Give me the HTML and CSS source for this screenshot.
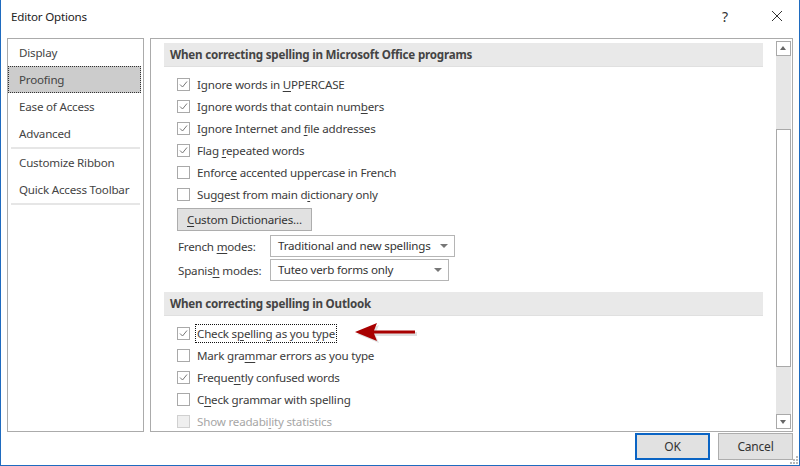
FILE: index.html
```html
<!DOCTYPE html>
<html>
<head>
    <meta charset="UTF-8">
    <title>Editor Options</title>
    <link rel="stylesheet" href="styles.css">
</head>
<body>
    <div class="Dialog">
        <div class="TitleBar">
            <span class="Title">Editor Options</span>
            <span class="Help">?</span>
            <svg class="Close" width="12" height="12" viewBox="0 0 12 12">
                <path d="M1 1 L11 11 M11 1 L1 11" stroke="#333" stroke-width="1" fill="none"/>
            </svg>
        </div>

        <div class="Body">
            <ul class="Nav">
                <li>Display</li>
                <li class="Selected"><span>Proofing</span></li>
                <li>Ease of Access</li>
                <li>Advanced</li>
                <li class="Sep"></li>
                <li>Customize Ribbon</li>
                <li>Quick Access Toolbar</li>
                <li class="Sep"></li>
            </ul>

            <div class="Pane">
                <div class="PaneContent">
                    <div class="Section">When correcting spelling in Microsoft Office programs</div>
                    <div class="Group">
                        <div class="Check On"><span class="Box"></span><span>Ignore words in <u>U</u>PPERCASE</span></div>
                        <div class="Check On"><span class="Box"></span><span>Ignore words that contain num<u>b</u>ers</span></div>
                        <div class="Check On"><span class="Box"></span><span>Ignore Internet and <u>f</u>ile addresses</span></div>
                        <div class="Check On"><span class="Box"></span><span>Flag <u>r</u>epeated words</span></div>
                        <div class="Check"><span class="Box"></span><span>Enforc<u>e</u> accented uppercase in French</span></div>
                        <div class="Check"><span class="Box"></span><span>Suggest from main d<u>i</u>ctionary only</span></div>
                        <button class="Btn Dict"><u>C</u>ustom Dictionaries...</button>
                        <div class="Field">
                            <label>French <u>m</u>odes:</label>
                            <div class="Select French">Traditional and new spellings</div>
                        </div>
                        <div class="Field">
                            <label>Spanis<u>h</u> modes:</label>
                            <div class="Select Spanish">Tuteo verb forms only</div>
                        </div>
                    </div>

                    <div class="Section">When correcting spelling in Outlook</div>
                    <div class="Group">
                        <div class="Check On Focus">
                            <span class="Box"></span><span class="Text">Check s<u>p</u>elling as you type</span>
                            <svg class="Arrow" width="68" height="24" viewBox="0 0 68 24">
                                <path d="M3 12 L25 3 L22 10 L63 10 L63 14 L22 14 L25 21 Z" fill="#000" opacity="0.12" transform="translate(1,1)"/>
                                <path d="M2 11 L24 2 L21 9.5 L62 9.5 L62 12.5 L21 12.5 L24 20 Z" fill="#a80000"/>
                            </svg>
                        </div>
                        <div class="Check"><span class="Box"></span><span>Mark gra<u>m</u>mar errors as you type</span></div>
                        <div class="Check On"><span class="Box"></span><span>Freque<u>n</u>tly confused words</span></div>
                        <div class="Check"><span class="Box"></span><span>C<u>h</u>eck grammar with spelling</span></div>
                        <div class="Check Disabled"><span class="Box"></span><span>Show readabi<u>l</u>ity statistics</span></div>
                    </div>
                </div>

                <div class="ScrollBar">
                    <div class="ScrollBtn Up"></div>
                    <div class="Track"><div class="Thumb"></div></div>
                    <div class="ScrollBtn Down"></div>
                </div>
            </div>
        </div>

        <div class="Footer">
            <button class="Btn Default">OK</button>
            <button class="Btn">Cancel</button>
            <svg class="Grip" width="8" height="8" viewBox="0 0 8 8">
                <rect x="6" y="0" width="2" height="2" fill="#b8b8b8"/>
                <rect x="3" y="3" width="2" height="2" fill="#b8b8b8"/>
                <rect x="6" y="3" width="2" height="2" fill="#b8b8b8"/>
                <rect x="0" y="6" width="2" height="2" fill="#b8b8b8"/>
                <rect x="3" y="6" width="2" height="2" fill="#b8b8b8"/>
                <rect x="6" y="6" width="2" height="2" fill="#b8b8b8"/>
            </svg>
        </div>
    </div>
</body>
</html>
```

FILE: styles.css
```css
* {
    box-sizing: border-box;
}

body {
    margin: 0;
    background: white;
    font-family: "Noto Sans", "Open Sans", sans-serif;
    font-size: 11.6px;
    letter-spacing: -0.2px;
    color: #3b3b3b;
}

u {
    text-decoration-thickness: 1px;
    text-underline-offset: 2px;
}

.Dialog {
    width: 800px;
    height: 466px;
    display: flex;
    flex-direction: column;
    border: 1px solid #1f6bbf;
    border-top: none;
    background: white;
}

/* title bar */
.TitleBar {
    height: 38px;
    display: flex;
    align-items: center;
    padding: 0 0 6px 10px;
}

.TitleBar .Title {
    flex: 1;
    color: #222;
}

.TitleBar .Help {
    width: 12px;
    margin-right: 37px;
    font-size: 14px;
    color: #333;
}

.TitleBar .Close {
    margin-right: 16px;
}

/* nav + pane */
.Body {
    height: 394px;
    display: flex;
    gap: 6px;
    padding: 0 6px;
}

.Nav {
    width: 137px;
    margin: 0;
    padding: 0;
    list-style: none;
    border: 1px solid #ababab;
}

.Nav li {
    height: 27px;
    line-height: 27px;
    padding-left: 11px;
    color: #444;
}

.Nav li.Selected {
    margin-right: 2px;
    background: #cccccc;
    border: 1px dotted #333;
    padding-left: 10px;
    line-height: 25px;
}

.Nav li.Sep {
    height: 2px;
    margin: 0 3px;
    background: #e6e6e6;
}

.Pane {
    width: 643px;
    display: flex;
    border: 1px solid #ababab;
    overflow: hidden;
}

.PaneContent {
    flex: 1;
    padding: 4px 13px 0 13px;
    overflow: hidden;
}

.Section {
    height: 24px;
    line-height: 23px;
    padding-left: 6px;
    background: #e9e9e9;
    border-bottom: 1px solid #e0e0e0;
    font-weight: bold;
    color: #444;
}

.Group {
    display: flex;
    flex-direction: column;
    align-items: flex-start;
    padding: 6px 0 10px 13px;
}

.Check {
    position: relative;
    height: 22px;
    display: flex;
    align-items: center;
    gap: 7px;
}

.Check .Box {
    width: 13px;
    height: 13px;
    border: 1px solid #a9a9a9;
    background: white;
}

.Check.On .Box {
    background: white url("data:image/svg+xml,%3Csvg xmlns='http://www.w3.org/2000/svg' width='11' height='11'%3E%3Cpath d='M2 5.5 L4.5 8 L9 2.5' stroke='%23777' fill='none'/%3E%3C/svg%3E") no-repeat center;
}

.Check.Disabled {
    color: #a6a6a6;
}

.Check.Disabled .Box {
    background: #efefef;
    border-color: #d0d0d0;
}

.Check.Focus .Text {
    margin-left: -1px;
    padding: 0 1px;
    outline: 1px dotted #111;
    line-height: 17px;
}

.Check .Arrow {
    position: absolute;
    left: 176px;
    top: -1px;
}

.Btn {
    font-family: inherit;
    font-size: 11.6px;
    letter-spacing: -0.2px;
    color: #333;
    background: #e1e1e1;
    border: 1px solid #adadad;
    padding: 0;
}

.Btn.Dict {
    width: 135px;
    height: 23px;
    margin: 3px 0;
    text-align: left;
    padding-left: 9px;
}

.Field {
    height: 24px;
    display: flex;
    align-items: center;
}

.Field label {
    width: 93px;
    padding-left: 1px;
}

.Select {
    position: relative;
    height: 22px;
    line-height: 20px;
    padding-left: 7px;
    border: 1px solid #b5b5b5;
    color: #333;
}

.Select::after {
    content: "";
    position: absolute;
    right: 6px;
    top: 8px;
    border: 4px solid transparent;
    border-top: 4px solid #777;
    border-bottom: none;
}

.Select.French {
    width: 185px;
}

.Select.Spanish {
    width: 179px;
}

/* scrollbar */
.ScrollBar {
    width: 15px;
    margin: 2px 1px 2px 0;
    display: flex;
    flex-direction: column;
    background: #e6e6e6;
}

.ScrollBtn {
    position: relative;
    height: 15px;
    border: 1px solid #a9a9a9;
    background: white;
}

.ScrollBtn::after {
    content: "";
    position: absolute;
    left: 3px;
    border: 3.5px solid transparent;
}

.ScrollBtn.Up::after {
    top: 4px;
    border-bottom: 4px solid #666;
    border-top: none;
}

.ScrollBtn.Down::after {
    top: 5px;
    border-top: 4px solid #666;
    border-bottom: none;
}

.Track {
    flex: 1;
}

.Thumb {
    height: 238px;
    margin-top: 73px;
    border: 1px solid #a9a9a9;
    background: white;
}

/* buttons row */
.Footer {
    position: relative;
    flex: 1;
    display: flex;
    justify-content: flex-end;
    gap: 8px;
    padding: 1px 6px 0 0;
}

.Footer .Btn {
    width: 75px;
    height: 27px;
    font-size: 12px;
}

.Footer .Btn.Default {
    border: 2px solid #0a64c4;
}

.Footer .Grip {
    position: absolute;
    right: 1px;
    bottom: 1px;
}
```
